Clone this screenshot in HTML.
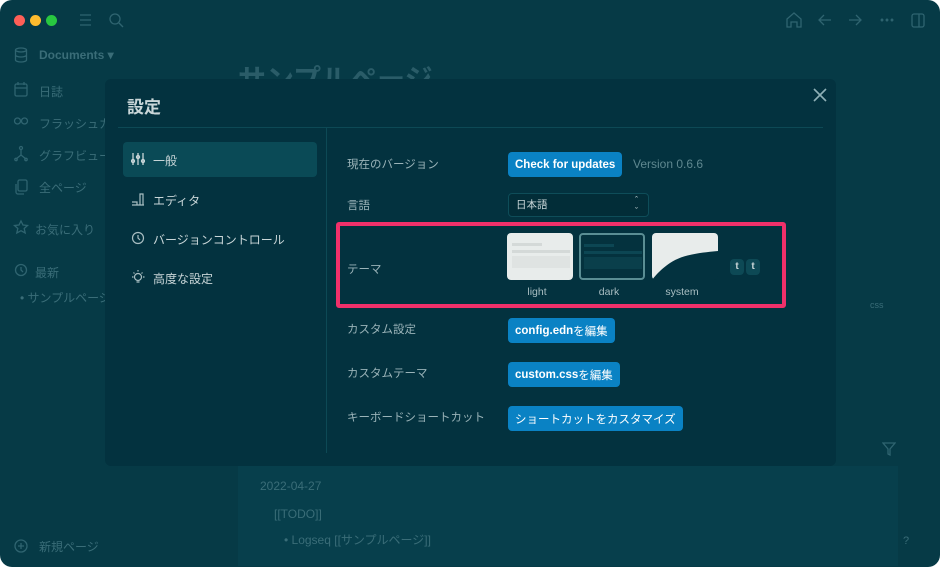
<!DOCTYPE html>
<html><head><meta charset="utf-8"><style>
*{box-sizing:border-box;margin:0;padding:0}
body{width:940px;height:567px;background:#fff;font-family:"Liberation Sans","Noto Sans CJK JP",sans-serif;overflow:hidden;position:relative}
.win{position:absolute;left:0;top:0;width:940px;height:567px;border-radius:12px;background:#063a46;overflow:hidden}
.a{position:absolute}
.side{font-size:12px;color:#3a6d78}
.modal{position:absolute;left:105px;top:79px;width:731px;height:387px;background:#03323f;border-radius:6px}
.lbl{position:absolute;left:242px;font-size:11.5px;color:#9ab3b8}
.btn{position:absolute;left:403px;height:25px;background:#0a82c4;color:#fff;font-size:11.5px;font-weight:bold;border-radius:4px;padding:0 7px;display:flex;align-items:center;white-space:nowrap}
.btn .j{font-weight:normal}
.nav{position:absolute;left:48px;font-size:12px;color:#c9d6d8}
.th{position:absolute;top:154px;width:66px;height:47px;border-radius:4px;overflow:hidden}
.tl{position:absolute;top:207px;font-size:10.5px;color:#a9bec2;width:66px;text-align:center}
</style></head><body>
<div class="win">
<div class="a" style="left:14px;top:15px;width:11px;height:11px;border-radius:50%;background:#fe5f57"></div>
<div class="a" style="left:30px;top:15px;width:11px;height:11px;border-radius:50%;background:#febc2e"></div>
<div class="a" style="left:46px;top:15px;width:11px;height:11px;border-radius:50%;background:#28c840"></div>
<svg class="a" style="left:78px;top:12px" width="48" height="16" stroke="#2f6470" fill="none" stroke-width="1.3"><path d="M2 3h11M2 8h11M2 13h11"/><circle cx="37" cy="7" r="5"/><path d="M41 11l4 4"/></svg>
<svg class="a" style="left:785px;top:11px" width="145" height="18" stroke="#2f6470" fill="none" stroke-width="1.3"><path d="M2 8l7-6 7 6v8h-4v-5h-6v5H2z"/><path d="M46 9h-12M39 4l-5 5 5 5"/><path d="M64 9h12M71 4l5 5-5 5"/><circle cx="97" cy="9" r=".8"/><circle cx="102" cy="9" r=".8"/><circle cx="107" cy="9" r=".8"/><rect x="127" y="3" width="12" height="13" rx="2"/><path d="M134 3v13"/></svg>
<svg class="a" style="left:13px;top:46px" width="20" height="520" stroke="#2f6470" fill="none" stroke-width="1.3">
<ellipse cx="8" cy="4" rx="5.5" ry="2"/><path d="M2.5 4v10c0 1 2.5 2 5.5 2s5.5-1 5.5-2V4M2.5 9c0 1 2.5 2 5.5 2s5.5-1 5.5-2"/>
<rect x="2" y="38" width="12" height="12" rx="1.5"/><path d="M2 42h12M5 36v3M11 36v3"/>
<circle cx="4.5" cy="75" r="3"/><circle cx="11.5" cy="75" r="3"/>
<path d="M8 103v6M8 109l-5 4M8 109l5 4"/><circle cx="8" cy="102" r="1.5"/><circle cx="3" cy="113.5" r="1.2"/><circle cx="13" cy="113.5" r="1.2"/>
<rect x="5" y="134" width="9" height="11" rx="1.5"/><path d="M3 138v8a2 2 0 0 0 2 2h6"/>
<path d="M8 175l2 4 4.5.5-3.3 3 1 4.5L8 184.7 3.8 187l1-4.5-3.3-3 4.5-.5z"/>
<circle cx="8" cy="224" r="5.5"/><path d="M8 221v3l2 2"/>
<circle cx="8" cy="500" r="6"/><path d="M8 497v6M5 500h6"/>
</svg>
<div class="a side" style="left:39px;top:48px;font-weight:bold">Documents ▾</div>
<div class="a side" style="left:39px;top:83px">日誌</div>
<div class="a side" style="left:39px;top:115px">フラッシュカード</div>
<div class="a side" style="left:39px;top:147px">グラフビュー</div>
<div class="a side" style="left:39px;top:179px">全ページ</div>
<div class="a side" style="left:35px;top:221px">お気に入り</div>
<div class="a side" style="left:35px;top:264px">最新</div>
<div class="a side" style="left:20px;top:289px">• サンプルページ</div>
<div class="a side" style="left:39px;top:538px">新規ページ</div>
<div class="a" style="left:238px;top:58px;font-size:28px;font-weight:bold;color:#2a5c68">サンプルページ</div>
<div class="a" style="left:870px;top:300px;font-size:9px;color:#3a6d78">css</div>
<div class="a" style="left:238px;top:466px;width:660px;height:100px;background:#073f4c"></div>
<div class="a" style="left:260px;top:479px;font-size:12px;color:#3a6d78">2022-04-27</div>
<div class="a" style="left:274px;top:507px;font-size:12px;color:#3a6d78">[[TODO]]</div>
<div class="a" style="left:284px;top:531px;font-size:12px;color:#3a6d78">• Logseq [[サンプルページ]]</div>
<div class="a" style="left:903px;top:535px;font-size:11px;color:#3a6d78">?</div>
<svg class="a" style="left:882px;top:441px" width="14" height="16" stroke="#2f6470" fill="none" stroke-width="1.3"><path d="M1 2h12L8 8v6l-2-1V8z"/></svg>

<div class="modal">
<div class="a" style="left:22px;top:14px;font-size:17px;font-weight:bold;color:#c9d6d8">設定</div>
<svg class="a" style="left:707px;top:8px" width="16" height="16" stroke="#8fb0b6" stroke-width="1.6"><path d="M2 2l12 12M14 2L2 14"/></svg>
<div class="a" style="left:13px;top:48px;width:705px;height:1px;background:#0d4955"></div>
<div class="a" style="left:221px;top:49px;width:1px;height:325px;background:#0d4955"></div>
<div class="a" style="left:18px;top:63px;width:194px;height:35px;background:#0a4a56;border-radius:4px"></div>
<svg class="a" style="left:26px;top:73px" width="14" height="14" stroke="#c9d6d8" fill="none" stroke-width="1.3"><path d="M2 1v12M7 1v12M12 1v12"/><circle cx="2" cy="9" r="1.5"/><circle cx="7" cy="5" r="1.5"/><circle cx="12" cy="9" r="1.5"/></svg>
<div class="nav" style="top:73px">一般</div>
<div class="nav" style="top:113px">エディタ</div>
<div class="nav" style="top:152px">バージョンコントロール</div>
<div class="nav" style="top:191px">高度な設定</div>
<svg class="a" style="left:26px;top:113px" width="14" height="14" stroke="#a9bec2" fill="none" stroke-width="1.2"><path d="M1 13h12M1 10h5v3M9 13V2h3v11"/></svg>
<svg class="a" style="left:26px;top:152px" width="14" height="14" stroke="#a9bec2" fill="none" stroke-width="1.2"><circle cx="7" cy="7" r="5.5"/><path d="M7 4v3l2 2"/></svg>
<svg class="a" style="left:26px;top:191px" width="14" height="14" stroke="#a9bec2" fill="none" stroke-width="1.2"><circle cx="7" cy="7" r="3.5"/><path d="M7 0v1.5M1 7h1.5M12 7h1.5M2.5 2.5l1 1M11.5 2.5l-1 1M5.5 12h3"/></svg>

<div class="lbl" style="top:77px">現在のバージョン</div>
<div class="btn" style="top:73px">Check for updates</div>
<div class="a" style="left:528px;top:78px;font-size:12px;color:#5f8890">Version 0.6.6</div>
<div class="lbl" style="top:118px">言語</div>
<div class="a" style="left:403px;top:114px;width:141px;height:24px;border:1px solid #0e4d59;background:#022d38;border-radius:4px;color:#c9d6d8;font-size:10.5px;line-height:22px;padding-left:7px">日本語<span style="position:absolute;right:10px;top:-1px;font-size:9px;line-height:11px;padding-top:2px">ˆ<br>ˇ</span></div>
<div class="a" style="left:231px;top:143px;width:450px;height:86px;border:4px solid #f0306a;border-radius:3px"></div>
<div class="lbl" style="top:182px">テーマ</div>
<div class="th" style="left:402px;background:#e8eceb"><div class="a" style="left:5px;top:10px;width:30px;height:3px;background:#d4d9d8"></div><div class="a" style="left:5px;top:17px;width:58px;height:3px;background:#d4d9d8"></div><div class="a" style="left:5px;top:23px;width:58px;height:12px;background:#dfe3e2"></div></div>
<div class="th" style="left:474px;background:#04323e;border:2px solid #5a8e94"><div class="a" style="left:3px;top:9px;width:30px;height:3px;background:#0c4653"></div><div class="a" style="left:3px;top:16px;width:58px;height:3px;background:#0c4653"></div><div class="a" style="left:3px;top:22px;width:58px;height:12px;background:#0a3f4b"></div></div>
<div class="th" style="left:547px;background:#03323f"><svg width="66" height="47"><path d="M0 0h66v18C45 20 30 22 18 30 8 37 4 42 0 47z" fill="#e8eceb"/></svg></div>
<div class="tl" style="left:399px">light</div>
<div class="tl" style="left:471px">dark</div>
<div class="tl" style="left:544px">system</div>
<div class="a" style="left:625px;top:180px;width:14px;height:16px;background:#0d4955;border-radius:4px;color:#c9d6d8;font-size:10px;font-weight:bold;text-align:center;line-height:16px">t</div>
<div class="a" style="left:641px;top:180px;width:14px;height:16px;background:#0d4955;border-radius:4px;color:#c9d6d8;font-size:10px;font-weight:bold;text-align:center;line-height:16px">t</div>
<div class="lbl" style="top:242px">カスタム設定</div>
<div class="btn" style="top:239px">config.edn<span class="j">を編集</span></div>
<div class="lbl" style="top:286px">カスタムテーマ</div>
<div class="btn" style="top:283px">custom.css<span class="j">を編集</span></div>
<div class="lbl" style="top:330px">キーボードショートカット</div>
<div class="btn" style="top:327px"><span class="j">ショートカットをカスタマイズ</span></div>
</div>
</div>
</body></html>
